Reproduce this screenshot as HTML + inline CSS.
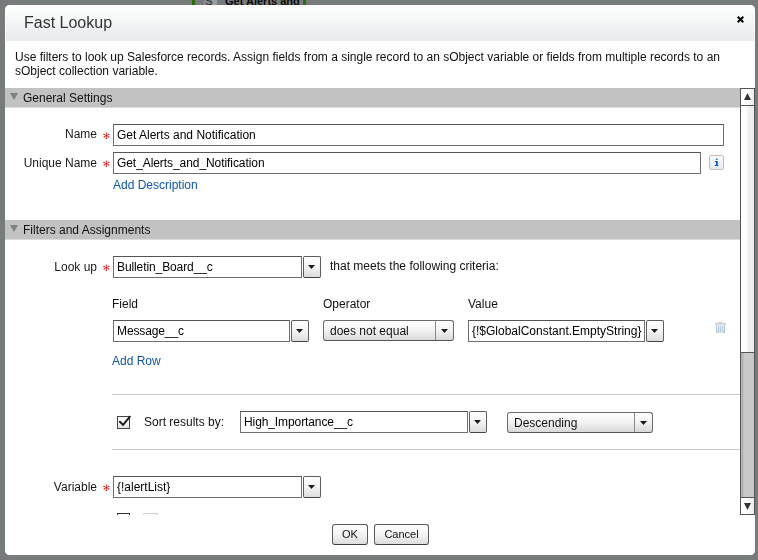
<!DOCTYPE html>
<html>
<head>
<meta charset="utf-8">
<title>Fast Lookup</title>
<style>
html,body{margin:0;padding:0;background:#777b7b;}
body{width:758px;height:560px;overflow:hidden;background:#777b7b;font-family:"Liberation Sans",sans-serif;font-size:12px;color:#222;position:relative;}
.abs{position:absolute;}
/* underlying canvas node peeking at top */
.peek{position:absolute;left:192px;top:-14px;width:114px;height:19px;box-sizing:border-box;border-left:3px solid #2b6e11;border-right:3px solid #2b6e11;background:#777b7b;}
.peek .ic{position:absolute;left:9px;top:2px;width:13px;height:17px;background:linear-gradient(90deg,#878b90 55%,#9a9ea3 60%);box-sizing:border-box;font-size:11px;line-height:14px;padding-top:6px;padding-right:3px;text-align:center;color:#2a2e33;}
.peek .tx{position:absolute;left:30px;top:8px;font-size:11px;font-weight:bold;line-height:14px;color:#0a0a0a;white-space:nowrap;}
/* dialog */
.dlg{will-change:transform;position:absolute;left:5px;top:5px;width:750px;height:550px;background:#fff;border-radius:4.5px;overflow:hidden;}
.hdr{position:absolute;left:1px;top:1px;width:748px;height:35px;border-radius:4px 4px 0 0;background:linear-gradient(#ffffff 0%,#fbfcfc 14%,#f0f2f3 58%,#e9eced 90%,#e9eced 100%);}
.title{position:absolute;left:19px;top:8px;font-size:16px;line-height:20px;color:#333;white-space:nowrap;}
.close{position:absolute;left:732px;top:11px;width:7px;height:7px;overflow:visible;}
.desc{position:absolute;left:10px;top:45px;width:730px;line-height:14px;color:#111;}
.sec{position:absolute;left:0;width:735px;height:19px;background:#c2c2c2;border-bottom:1px solid #dcdcdc;}
.sec .tri{position:absolute;left:5px;top:5px;width:0;height:0;border-left:4px solid transparent;border-right:4px solid transparent;border-top:7px solid #7a8282;}
.sec .st{position:absolute;left:18px;top:3px;line-height:14px;color:#111;white-space:nowrap;}
.lbl{position:absolute;text-align:right;width:92px;left:0;line-height:14px;white-space:nowrap;color:#1a1a1a;}
.req{position:absolute;width:7px;height:7px;}
.inp{position:absolute;box-sizing:border-box;border:1px solid #6e6e6e;border-top-color:#555;background:#fff;height:22px;line-height:20px;padding-left:3px;white-space:nowrap;overflow:hidden;color:#000;}
.cbtn{position:absolute;box-sizing:border-box;width:18px;height:22px;border:1px solid #5e5e5e;border-bottom-color:#444;border-radius:2px;background:linear-gradient(#ffffff,#f4f4f4 50%,#dcdcdc);}
.cbtn:after{content:"";position:absolute;left:4px;top:8px;width:7px;height:4px;background:#1c1c1c;clip-path:polygon(0 0,100% 0,50% 100%);}
.sel{position:absolute;box-sizing:border-box;height:21px;border:1px solid #6b6b6b;border-bottom-color:#555;border-radius:3px;background:linear-gradient(#ffffff,#f2f2f2 50%,#d9d9d9);line-height:20px;padding-left:6px;white-space:nowrap;color:#111;}
.sel .sep{position:absolute;right:17px;top:0;bottom:0;width:1px;background:#8a8a8a;}
.sel:after{content:"";position:absolute;right:5px;top:8px;width:7px;height:4px;background:#1c1c1c;clip-path:polygon(0 0,100% 0,50% 100%);}
.lnk{position:absolute;color:#0e57a6;line-height:14px;white-space:nowrap;}
.txt{position:absolute;line-height:14px;white-space:nowrap;color:#111;}
.hr{position:absolute;left:107px;width:628px;height:1px;background:#c9c9c9;}
.btn{position:absolute;box-sizing:border-box;height:21px;border:1px solid #5a5a5a;border-bottom:1.5px solid #3c3c3c;border-radius:3px;background:linear-gradient(#ffffff,#f3f3f3 50%,#dedede);text-align:center;font-size:11px;line-height:19px;color:#111;}
/* scrollbar */
.sb{position:absolute;left:735px;top:83px;width:15px;height:427px;box-sizing:border-box;border-left:1px solid #555;border-right:1px solid #555;background:linear-gradient(90deg,#fff 0,#fefefe 38%,#f0f0f0 58%,#eeeeee 100%);}
.sbb{position:absolute;left:-1px;width:15px;height:18px;box-sizing:border-box;border:1px solid #555;background:linear-gradient(90deg,#fff,#fff 45%,#ebebeb);}
.sbt{position:absolute;left:-1px;width:15px;box-sizing:border-box;border:1px solid #555;background:linear-gradient(90deg,#b3b3b3 0,#b3b3b3 2px,#c9c9c9 3px,#c9c9c9 100%);}
</style>
</head>
<body>
<div class="peek"><div class="ic">S</div><div class="tx">Get Alerts and</div></div>

<div class="dlg">
  <div class="hdr"></div>
  <div class="title">Fast Lookup</div>
  <svg class="close" viewBox="0 0 7 7"><path d="M0.7 0.7L6.3 6.3M6.3 0.7L0.7 6.3" stroke="#fff" stroke-width="3.2" fill="none" opacity=".7"/><path d="M0.7 0.7L6.3 6.3M6.3 0.7L0.7 6.3" stroke="#0a0a0a" stroke-width="2.1" fill="none"/></svg>
  <div class="desc">Use filters to look up Salesforce records. Assign fields from a single record to an sObject variable or fields from multiple records to an sObject collection variable.</div>

  <!-- General Settings -->
  <div class="sec" style="top:83px"><div class="tri"></div><div class="st">General Settings</div></div>

  <div class="lbl" style="top:122px">Name</div>
  <svg class="req" style="left:98px;top:126.5px" viewBox="0 0 7 7"><path d="M3.4 1V6.6M0.9 2.4L5.7 4.9M5.7 2.4L1.1 4.9" stroke="#dc2a2a" stroke-width="0.8" fill="none" opacity=".85"/><g fill="#cc0808"><circle cx="3.4" cy="3.7" r=".85"/><circle cx="3.4" cy="1.1" r=".72"/><circle cx="3.4" cy="6.5" r=".72"/><circle cx="1" cy="2.4" r=".72"/><circle cx="5.7" cy="2.4" r=".72"/><circle cx="1.2" cy="4.9" r=".72"/><circle cx="5.7" cy="4.9" r=".72"/></g></svg>
  <div class="inp" style="left:108px;top:119px;width:611px">Get Alerts and Notification</div>

  <div class="lbl" style="top:151px">Unique Name</div>
  <svg class="req" style="left:98px;top:154.5px" viewBox="0 0 7 7"><path d="M3.4 1V6.6M0.9 2.4L5.7 4.9M5.7 2.4L1.1 4.9" stroke="#dc2a2a" stroke-width="0.8" fill="none" opacity=".85"/><g fill="#cc0808"><circle cx="3.4" cy="3.7" r=".85"/><circle cx="3.4" cy="1.1" r=".72"/><circle cx="3.4" cy="6.5" r=".72"/><circle cx="1" cy="2.4" r=".72"/><circle cx="5.7" cy="2.4" r=".72"/><circle cx="1.2" cy="4.9" r=".72"/><circle cx="5.7" cy="4.9" r=".72"/></g></svg>
  <div class="inp" style="left:108px;top:147px;width:588px;letter-spacing:-0.07px">Get_Alerts_and_Notification</div>
  <div class="abs" style="left:704px;top:150px;width:15px;height:15px;box-sizing:border-box;border:1px solid #c2c2c2;border-radius:2px;background:linear-gradient(#f7f9fb,#eef1f5 60%,#e4e8ee)"><svg class="abs" style="left:0;top:0;width:13px;height:13px" viewBox="0 0 13 13"><ellipse cx="6.8" cy="3.3" rx="1" ry="0.7" fill="#0b5fcb"/><path d="M4.8 5H7.8V9H8.4V9.9H4.8V9H5.9V5.9H4.8Z" fill="#0b5fcb"/></svg></div>

  <div class="lnk" style="left:108px;top:173px">Add Description</div>

  <!-- Filters and Assignments -->
  <div class="sec" style="top:215px"><div class="tri"></div><div class="st">Filters and Assignments</div></div>

  <div class="lbl" style="top:255px">Look up</div>
  <svg class="req" style="left:98px;top:258.5px" viewBox="0 0 7 7"><path d="M3.4 1V6.6M0.9 2.4L5.7 4.9M5.7 2.4L1.1 4.9" stroke="#dc2a2a" stroke-width="0.8" fill="none" opacity=".85"/><g fill="#cc0808"><circle cx="3.4" cy="3.7" r=".85"/><circle cx="3.4" cy="1.1" r=".72"/><circle cx="3.4" cy="6.5" r=".72"/><circle cx="1" cy="2.4" r=".72"/><circle cx="5.7" cy="2.4" r=".72"/><circle cx="1.2" cy="4.9" r=".72"/><circle cx="5.7" cy="4.9" r=".72"/></g></svg>
  <div class="inp" style="left:108px;top:251px;width:189px;letter-spacing:-0.1px">Bulletin_Board__c</div>
  <div class="cbtn" style="left:298px;top:251px"></div>
  <div class="txt" style="left:325px;top:254px">that meets the following criteria:</div>

  <div class="txt" style="left:107px;top:292px">Field</div>
  <div class="txt" style="left:318px;top:292px">Operator</div>
  <div class="txt" style="left:463px;top:292px">Value</div>

  <div class="inp" style="left:108px;top:315px;width:177px;letter-spacing:-0.12px">Message__c</div>
  <div class="cbtn" style="left:286px;top:315px"></div>
  <div class="sel" style="left:318px;top:315px;width:131px">does not equal<span class="sep"></span></div>
  <div class="inp" style="left:463px;top:315px;width:177px">{!$GlobalConstant.EmptyString}</div>
  <div class="cbtn" style="left:641px;top:315px"></div>
  <svg class="abs" style="left:709px;top:316px;width:13px;height:13px" viewBox="714 321 13 13"><rect x="718" y="321.9" width="4.8" height="1.1" fill="#d2d3d8"/><rect x="715" y="323" width="11" height="1.8" fill="#cfd2d7"/><rect x="716" y="325" width="9" height="4.5" fill="#fbfdfe"/><rect x="716" y="329.5" width="9" height="1.2" fill="#eef5f9"/><rect x="716" y="330.7" width="9" height="1.2" fill="#dfecf4"/><rect x="716" y="331.9" width="9" height="1.1" fill="#cbe0ec"/><rect x="716" y="325" width="0.8" height="8" fill="#aebdca"/><rect x="723.8" y="325" width="1.2" height="8" fill="#aebdca"/><rect x="717.75" y="325.6" width="0.8" height="6" fill="#8fa7ba"/><rect x="719.75" y="325.6" width="0.8" height="6" fill="#8fa7ba"/><rect x="721.75" y="325.6" width="0.8" height="6" fill="#8fa7ba"/></svg>

  <div class="lnk" style="left:107px;top:349px">Add Row</div>

  <div class="hr" style="top:389px"></div>

  <div class="abs" style="left:112px;top:411px;width:13px;height:13px;box-sizing:border-box;border:1px solid #444;background:linear-gradient(#ffffff,#f7f7f7 45%,#e2e2e2)"></div>
  <svg class="abs" style="left:112px;top:410px;width:15px;height:14px;overflow:visible" viewBox="0 -1 15 14"><path d="M2.3 5.3L6.1 8.9L13.3 0.2" stroke="#1a1a1a" stroke-width="2" fill="none"/></svg>
  <div class="txt" style="left:139px;top:410px">Sort results by:</div>
  <div class="inp" style="left:235px;top:406px;width:228px;letter-spacing:-0.1px">High_Importance__c</div>
  <div class="cbtn" style="left:464px;top:406px"></div>
  <div class="sel" style="left:502px;top:407px;width:146px">Descending<span class="sep"></span></div>

  <div class="hr" style="top:444px"></div>

  <div class="lbl" style="top:475px">Variable</div>
  <svg class="req" style="left:98px;top:478.5px" viewBox="0 0 7 7"><path d="M3.4 1V6.6M0.9 2.4L5.7 4.9M5.7 2.4L1.1 4.9" stroke="#dc2a2a" stroke-width="0.8" fill="none" opacity=".85"/><g fill="#cc0808"><circle cx="3.4" cy="3.7" r=".85"/><circle cx="3.4" cy="1.1" r=".72"/><circle cx="3.4" cy="6.5" r=".72"/><circle cx="1" cy="2.4" r=".72"/><circle cx="5.7" cy="2.4" r=".72"/><circle cx="1.2" cy="4.9" r=".72"/><circle cx="5.7" cy="4.9" r=".72"/></g></svg>
  <div class="inp" style="left:108px;top:471px;width:189px">{!alertList}</div>
  <div class="cbtn" style="left:298px;top:471px"></div>

  <div class="abs" style="left:112px;top:508px;width:13px;height:2px;box-sizing:border-box;border:1px solid #333;border-bottom:0"></div>
  <div class="abs" style="left:138px;top:508px;width:15px;height:2px;box-sizing:border-box;border:1px solid #ccc;border-bottom:0;border-radius:3px 3px 0 0"></div>

  <!-- scrollbar -->
  <div class="sb">
    <div class="sbb" style="top:0"><svg class="abs" style="left:3px;top:4px;width:7px;height:7px" viewBox="0 0 7 7"><path d="M3.5 0L7 7H0Z" fill="#333"/></svg></div>
    <div class="sbt" style="top:264px;height:146px"></div>
    <div class="sbb" style="top:409px"><svg class="abs" style="left:3px;top:5px;width:7px;height:7px" viewBox="0 0 7 7"><path d="M0 0H7L3.5 7Z" fill="#333"/></svg></div>
  </div>

  <div class="btn" style="left:327px;top:519px;width:36px">OK</div>
  <div class="btn" style="left:369px;top:519px;width:55px">Cancel</div>
</div>
</body>
</html>
